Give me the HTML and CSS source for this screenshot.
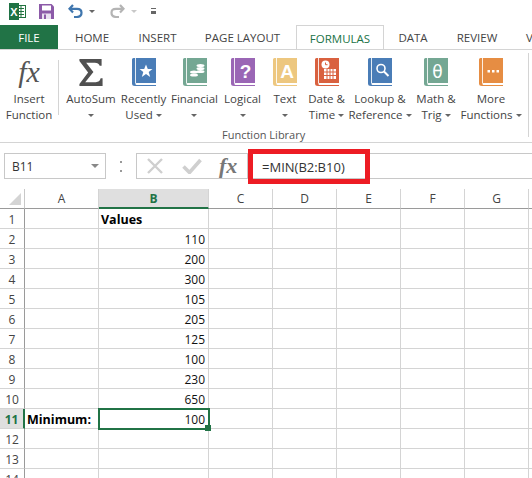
FILE: index.html
```html
<!DOCTYPE html>
<html lang="en">
<head>
<meta charset="utf-8">
<title>Excel MIN formula</title>
<link rel="stylesheet" href="styles.css">
</head>
<body>
<svg class="defs" width="0" height="0" aria-hidden="true">
  <symbol id="book" viewBox="0 0 24 28">
    <path d="M0 1.500Q0 0 1.500 0H24V25H4.500Q3.500 25 3.500 26T4.500 27H24V28H3Q0 28 0 25.500Z" fill="currentColor"/>
    <path d="M3.500 0V25.500" stroke="#fff" stroke-opacity=".85" stroke-width="1"/>
  </symbol>
</svg>
<div class="qat">
  <svg class="q-excel" width="17" height="17" viewBox="0 0 17 17"><rect x="7.500" y="2.500" width="9" height="12" fill="#fff" stroke="#21733f"/><path d="M9 5.500h6M9 8.500h6M9 11.500h6M12 3v11" stroke="#21733f" stroke-width="1"/><rect x="0" y="0" width="10" height="17" fill="#1f7244"/><text x="5" y="12.500" class="q-x">X</text></svg>
  <svg class="q-save" width="15" height="15" viewBox="0 0 15 15"><path d="M0 0H12.500L15 2.500V15H0Z" fill="#8c5aa8"/><rect x="3" y="1.500" width="9" height="5" fill="#fff"/><rect x="3" y="9.500" width="9" height="5.500" fill="#e9dff0"/><rect x="5" y="10.500" width="2" height="4.500" fill="#8c5aa8"/></svg>
  <svg class="q-undo" width="15" height="14" viewBox="0 0 15 14"><path d="M5 1 1.500 4.800 5 8.500M2 4.800H9Q13.500 4.800 13.500 8.800T9 13H6" fill="none" stroke="#3f76ae" stroke-width="2.200"/></svg>
  <span class="q-drop"></span>
  <svg class="q-redo" width="15" height="14" viewBox="0 0 15 14"><path d="M10 1 13.500 4.800 10 8.500M13 4.800H6Q1.500 4.800 1.500 8.800T6 13H9" fill="none" stroke="#b4b4b4" stroke-width="2.200"/></svg>
  <span class="q-drop q-drop-off"></span>
  <span class="q-more"></span>
</div>
<nav class="tabs">
  <span class="tab tab-file">FILE</span>
  <span class="tab t-home">HOME</span>
  <span class="tab t-insert">INSERT</span>
  <span class="tab t-page">PAGE LAYOUT</span>
  <span class="tab tab-active">FORMULAS</span>
  <span class="tab t-data">DATA</span>
  <span class="tab t-review">REVIEW</span>
  <span class="tab t-view">VIEW</span>
</nav>
<section class="ribbon">
  <div class="rb w-insert">
    <span class="ic"><span class="fx fx-big">fx</span></span>
    <span class="lb">Insert<br>Function</span>
  </div>
  <span class="rsep"></span>
  <div class="rb w-auto">
    <span class="ic"><svg width="24" height="27" viewBox="0 0 24 28"><path d="M0 0H23V7H21Q20 4 16 4H7L14.500 13.500 6 24H17Q21 24 22 20H24V28H0V26L9 14 0 2Z" fill="#505050"/></svg></span>
    <span class="lb">AutoSum<br><i class="dd"></i></span>
  </div>
  <div class="rb w-recent">
    <span class="ic"><svg class="bk c-blue" width="24" height="28"><use href="#book"/><path d="M14 6.500 15.800 11H20.500L16.700 14 18.200 19 14 16 9.800 19 11.300 14 7.500 11H12.200Z" fill="#fff"/></svg></span>
    <span class="lb">Recently<br>Used <i class="dd"></i></span>
  </div>
  <div class="rb w-fin">
    <span class="ic"><svg class="bk c-green" width="24" height="28"><use href="#book"/><ellipse cx="17.500" cy="7.500" rx="4" ry="1.600" fill="#fff"/><ellipse cx="17.500" cy="10.500" rx="4" ry="1.600" fill="#fff"/><ellipse cx="17.500" cy="13.500" rx="4" ry="1.600" fill="#fff"/><ellipse cx="11" cy="14" rx="4" ry="1.600" fill="#fff"/><ellipse cx="11" cy="17" rx="4" ry="1.600" fill="#fff"/></svg></span>
    <span class="lb">Financial<br><i class="dd"></i></span>
  </div>
  <div class="rb w-log">
    <span class="ic"><svg class="bk c-purple" width="24" height="28"><use href="#book"/><text x="14.500" y="20" class="g">?</text></svg></span>
    <span class="lb">Logical<br><i class="dd"></i></span>
  </div>
  <div class="rb w-text">
    <span class="ic"><svg class="bk c-yellow" width="24" height="28"><use href="#book"/><text x="14" y="20" class="g">A</text></svg></span>
    <span class="lb">Text<br><i class="dd"></i></span>
  </div>
  <div class="rb w-date">
    <span class="ic"><svg class="bk c-red" width="24" height="28"><use href="#book"/><path d="M9 11h12v10H9z" fill="#fff"/><path d="M12 11v10M15 11v10M18 11v10M9 14h12M9 17.500h12" stroke="#d9613f"/><circle cx="10.500" cy="6.500" r="4" fill="#fff"/><path d="M10.500 4.500v2.200h2" fill="none" stroke="#d9613f"/></svg></span>
    <span class="lb">Date &amp;<br>Time <i class="dd"></i></span>
  </div>
  <div class="rb w-look">
    <span class="ic"><svg class="bk c-blue" width="24" height="28"><use href="#book"/><circle cx="13" cy="10.500" r="4" fill="none" stroke="#fff" stroke-width="1.600"/><path d="M16 13.500 20.500 18" stroke="#fff" stroke-width="2"/></svg></span>
    <span class="lb">Lookup &amp;<br>Reference <i class="dd"></i></span>
  </div>
  <div class="rb w-math">
    <span class="ic"><svg class="bk c-green" width="24" height="28"><use href="#book"/><text x="13.500" y="19.500" class="g g-light">θ</text></svg></span>
    <span class="lb">Math &amp;<br>Trig <i class="dd"></i></span>
  </div>
  <div class="rb w-more">
    <span class="ic"><svg class="bk c-orange" width="24" height="28"><use href="#book"/><rect x="8.500" y="12" width="2.500" height="2.500" fill="#fff"/><rect x="13" y="12" width="2.500" height="2.500" fill="#fff"/><rect x="17.500" y="12" width="2.500" height="2.500" fill="#fff"/></svg></span>
    <span class="lb">More<br>Functions <i class="dd"></i></span>
  </div>
  <span class="rsep rsep-end"></span>
  <span class="grp">Function Library</span>
</section>
<section class="fbar">
  <div class="namebox"><span>B11</span><i class="dd dd-name"></i></div>
  <span class="grip"></span>
  <div class="fbtns">
    <svg width="18" height="16" viewBox="0 0 18 16"><path d="M2 1 16 15M16 1 2 15" stroke="#cfcfcf" stroke-width="2.400"/></svg>
    <svg class="f-check" width="20" height="16" viewBox="0 0 20 16"><path d="M1.500 8.500 7.500 14.500 18.500 2" fill="none" stroke="#cfcfcf" stroke-width="3.600"/></svg>
    <span class="fx fx-small">fx</span>
  </div>
  <div class="finput">
    <span>=MIN(B2:B10)</span>
    <span class="redbox"></span>
  </div>
</section>
<section class="sheet">
  <div class="corner"><svg width="12" height="12" viewBox="0 0 12 12"><path d="M12 0V12H0Z" fill="#d4d4d4"/></svg></div>
  <div class="ch">A</div><div class="ch ch-on">B</div><div class="ch">C</div><div class="ch">D</div><div class="ch">E</div><div class="ch">F</div><div class="ch">G</div><div class="ch"></div>

  <div class="rh">1</div><div class="c"></div><div class="c c-b">Values</div><div class="c"></div><div class="c"></div><div class="c"></div><div class="c"></div><div class="c"></div><div class="c"></div>
  <div class="rh">2</div><div class="c"></div><div class="c c-n">110</div><div class="c"></div><div class="c"></div><div class="c"></div><div class="c"></div><div class="c"></div><div class="c"></div>
  <div class="rh">3</div><div class="c"></div><div class="c c-n">200</div><div class="c"></div><div class="c"></div><div class="c"></div><div class="c"></div><div class="c"></div><div class="c"></div>
  <div class="rh">4</div><div class="c"></div><div class="c c-n">300</div><div class="c"></div><div class="c"></div><div class="c"></div><div class="c"></div><div class="c"></div><div class="c"></div>
  <div class="rh">5</div><div class="c"></div><div class="c c-n">105</div><div class="c"></div><div class="c"></div><div class="c"></div><div class="c"></div><div class="c"></div><div class="c"></div>
  <div class="rh">6</div><div class="c"></div><div class="c c-n">205</div><div class="c"></div><div class="c"></div><div class="c"></div><div class="c"></div><div class="c"></div><div class="c"></div>
  <div class="rh">7</div><div class="c"></div><div class="c c-n">125</div><div class="c"></div><div class="c"></div><div class="c"></div><div class="c"></div><div class="c"></div><div class="c"></div>
  <div class="rh">8</div><div class="c"></div><div class="c c-n">100</div><div class="c"></div><div class="c"></div><div class="c"></div><div class="c"></div><div class="c"></div><div class="c"></div>
  <div class="rh">9</div><div class="c"></div><div class="c c-n">230</div><div class="c"></div><div class="c"></div><div class="c"></div><div class="c"></div><div class="c"></div><div class="c"></div>
  <div class="rh">10</div><div class="c"></div><div class="c c-n">650</div><div class="c"></div><div class="c"></div><div class="c"></div><div class="c"></div><div class="c"></div><div class="c"></div>
  <div class="rh rh-on">11</div><div class="c c-b">Minimum:</div><div class="c c-n c-sel">100<span class="handle"></span></div><div class="c"></div><div class="c"></div><div class="c"></div><div class="c"></div><div class="c"></div><div class="c"></div>
  <div class="rh">12</div><div class="c"></div><div class="c"></div><div class="c"></div><div class="c"></div><div class="c"></div><div class="c"></div><div class="c"></div><div class="c"></div>
  <div class="rh">13</div><div class="c"></div><div class="c"></div><div class="c"></div><div class="c"></div><div class="c"></div><div class="c"></div><div class="c"></div><div class="c"></div>
  <div class="rh">14</div><div class="c"></div><div class="c"></div><div class="c"></div><div class="c"></div><div class="c"></div><div class="c"></div><div class="c"></div><div class="c"></div>
</section>
</body>
</html>
```
FILE: styles.css
```css
* { box-sizing: border-box; }
html, body { margin: 0; height: 100%; overflow: hidden; background: #fff; }
body { width: 532px; height: 478px; font-family: "Open Sans", "Liberation Sans", sans-serif; font-size: 12px; color: #444; }
.defs { display: block; height: 0; }

.qat { height: 25px; display: flex; align-items: center; padding-bottom: 3px; }
.q-excel { margin-left: 9px; }
.q-x { font: bold 11px "Liberation Sans", sans-serif; fill: #fff; text-anchor: middle; }
.q-save { margin-left: 13px; }
.q-undo { margin-left: 14px; }
.q-drop { width: 0; height: 0; margin-left: 6px; border: 3px solid transparent; border-top: 3px solid #666; border-bottom: 0; }
.q-drop-off { border-top-color: #c8c8c8; }
.q-redo { margin-left: 15px; }
.q-more { width: 5px; height: 6px; margin-left: 14px; border-top: 1px solid #666; border-bottom: 3px solid #666; }

.tabs { height: 25px; display: flex; border-bottom: 1px solid #d4d4d4; overflow: hidden; font-size: 11.5px; }
.tab { display: flex; align-items: center; justify-content: center; height: 25px; flex: none; color: #444; white-space: nowrap; }
.tab-file { width: 58px; background: #217346; color: #fff; }
.t-home { width: 68px; }
.t-insert { width: 63px; }
.t-page { width: 107px; }
.tab-active { width: 88px; color: #217346; background: #fff; border: 1px solid #d4d4d4; border-bottom: 0; }
.t-data { width: 58px; }
.t-review { width: 70px; }
.t-view { width: 20px; justify-content: flex-start; padding-left: 14px; }

.ribbon { position: relative; height: 93px; display: flex; border-bottom: 1px solid #d4d4d4; padding-top: 8px; }
.rb { flex: none; display: flex; flex-direction: column; align-items: center; }
.ic { height: 28px; display: flex; justify-content: center; align-items: center; }
.lb { margin-top: 5px; line-height: 16px; text-align: center; white-space: nowrap; font-size: 11.5px; color: #444; }
.dd { display: inline-block; width: 0; height: 0; vertical-align: middle; border: 3px solid transparent; border-top: 3px solid #666; border-bottom: 0; }
.w-insert { width: 58px; }
.w-auto { width: 52px; margin-left: 6px; }
.w-recent { width: 53px; }
.w-fin { width: 49px; }
.w-log { width: 47px; }
.w-text { width: 38px; }
.w-date { width: 45px; }
.w-look { width: 62px; }
.w-math { width: 50px; }
.w-more { width: 60px; }
.rsep { flex: none; width: 1px; height: 55px; margin-top: 2px; background: #d4d4d4; }
.rsep-end { height: 84px; margin-top: -5px; margin-left: 7px; }
.bk.c-blue { color: #4a7db7; }
.bk.c-green { color: #74a793; }
.bk.c-purple { color: #9a66b5; }
.bk.c-yellow { color: #edc77f; }
.bk.c-red { color: #d9613f; }
.bk.c-orange { color: #e68d43; }
.g { font: bold 19px "Liberation Sans", sans-serif; fill: #fff; text-anchor: middle; }
.g-light { font: 17px "DejaVu Sans", sans-serif; }
.fx { font-family: "Liberation Serif", serif; font-style: italic; color: #555; }
.fx-big { font-size: 30px; line-height: 28px; }
.fx-small { font-size: 22px; line-height: 22px; font-weight: bold; color: #777; margin-left: 17px; }
.grp { position: absolute; left: 222px; top: 77px; font-size: 11px; color: #555; }

.fbar { height: 26px; margin-top: 10px; display: flex; align-items: stretch; }
.namebox { width: 102px; margin-left: 4px; border: 1px solid #c8c8c8; background: #fff; display: flex; align-items: center; justify-content: space-between; padding: 0 6px 0 7px; color: #333; font-size: 12px; }
.dd-name { border-width: 4px; border-top-color: #888; border-bottom: 0; }
.grip { width: 2px; height: 11px; margin: 8px 14px 0; border-top: 2px dotted #999; border-bottom: 2px dotted #999; }
.fbtns { width: 112px; border: 1px solid #c8c8c8; background: #fff; display: flex; align-items: center; padding-left: 9px; }
.f-check { margin-left: 18px; }
.finput { flex: 1; position: relative; padding: 1px 0 0 14px; display: flex; align-items: center; color: #333; font-size: 13px; border-top: 1px solid #c8c8c8; border-bottom: 1px solid #c8c8c8; }
.redbox { position: absolute; left: 0; top: -5px; width: 122px; height: 35px; border: 5px solid #ed1c24; }

.sheet { margin-top: 10px; display: grid; grid-template-columns: 25px 74px 110px 64px 64px 64px 64px 64px 64px; grid-auto-rows: 20px; background: #fff; }
.corner { height: 20px; background: #fff; border-right: 1px solid #c8c8c8; border-bottom: 1px solid #9a9a9a; display: flex; align-items: flex-end; justify-content: flex-end; padding: 0 3px 3px 0; }
.ch { height: 20px; display: flex; align-items: center; justify-content: center; border-right: 1px solid #d4d4d4; border-bottom: 1px solid #9a9a9a; color: #444; font-size: 12px; }
.ch-on { background: #dfdfdf; color: #217346; font-weight: bold; border-bottom: 2px solid #217346; }
.rh { display: flex; align-items: center; justify-content: center; padding-top: 1px; border-right: 1px solid #9a9a9a; border-bottom: 1px solid #d4d4d4; color: #444; font-size: 12px; }
.rh-on { background: #dfdfdf; color: #217346; font-weight: bold; border-right: 2px solid #217346; }
.c { border-right: 1px solid #d4d4d4; border-bottom: 1px solid #d4d4d4; display: flex; align-items: center; padding: 1px 3px 0 2px; color: #111; font-size: 12px; position: relative; white-space: nowrap; }
.c-b { font-weight: bold; font-size: 12.5px; color: #000; }
.c-n { justify-content: flex-end; }
.c-sel { outline: 2px solid #217346; outline-offset: -1px; z-index: 1; }
.handle { position: absolute; right: -3px; bottom: -3px; width: 6px; height: 6px; background: #217346; }
```
